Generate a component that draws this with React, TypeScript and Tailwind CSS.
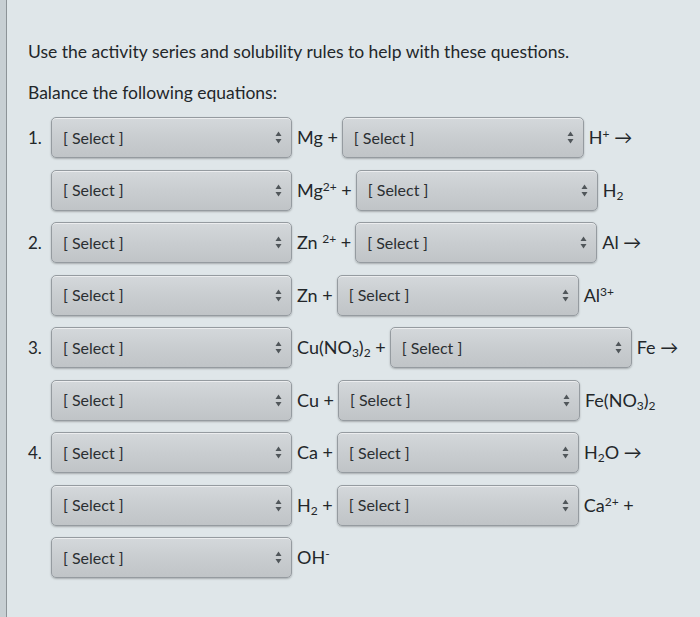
import React from "react"

type Part = React.ReactNode

function Arrows() {
  return (
    <svg width="7" height="13" viewBox="0 0 7 13" className="shrink-0">
      <path d="M3.5 0.5 L6.5 5 L0.5 5 Z" fill="#50565a" />
      <path d="M3.5 12.5 L6.5 8 L0.5 8 Z" fill="#50565a" />
    </svg>
  )
}

function Select({ w }: { w: string }) {
  return (
    <div
      className={`${w} h-[41px] shrink-0 flex items-center justify-between pl-[11px] pr-[9px] rounded-[5px] border border-[#959ba0] bg-gradient-to-b from-[#d4d8db] via-[#c9cdd0] to-[#c0c4c7] shadow-[0_1px_2px_rgba(0,0,0,0.25),inset_0_1px_0_rgba(255,255,255,0.55)]`}
    >
      <span className="text-[16px] text-[#2b2f32]">[ Select ]</span>
      <Arrows />
    </div>
  )
}

function Txt({ children }: { children: Part }) {
  return <span className="ml-[5px] mr-[4px] whitespace-nowrap text-[18px] text-[#23272a]">{children}</span>
}

const Sup = ({ children }: { children: Part }) => <sup className="text-[12px]">{children}</sup>
const Sub = ({ children }: { children: Part }) => <sub className="text-[12px]">{children}</sub>

interface RowProps {
  num?: string
  mid: Part
  end: Part
  second?: boolean
}

function Row({ num, mid, end, second = true }: RowProps) {
  return (
    <div className="flex items-center h-[41px]">
      <span className="w-[23px] shrink-0 text-[17px] text-[#23272a]">{num}</span>
      <Select w="w-[241px]" />
      <Txt>{mid}</Txt>
      {second && <Select w="w-[242px]" />}
      {end && <Txt>{end}</Txt>}
    </div>
  )
}

export default function App() {
  return (
    <div
      className="w-[700px] h-[617px] flex overflow-hidden bg-[#dfe6e9]"
      style={{ fontFamily: "Lato, 'Open Sans', sans-serif" }}
    >
      <div className="w-[7px] shrink-0 bg-[#c7cfd3] border-r border-[#8c9397]" />
      <div className="flex-1 pl-[21px] pt-[40px]">
        <p className="text-[17.5px] leading-[24px] text-[#23272a]">
          Use the activity series and solubility rules to help with these questions.
        </p>
        <p className="mt-[17px] text-[17.5px] leading-[24px] text-[#23272a]">Balance the following equations:</p>

        <div className="mt-[12px] flex flex-col gap-[11.5px]">
          <Row num="1." mid={<>Mg +</>} end={<>H<Sup>+</Sup> →</>} />
          <Row mid={<>Mg<Sup>2+</Sup> +</>} end={<>H<Sub>2</Sub></>} />
          <Row num="2." mid={<>Zn <Sup>2+</Sup> +</>} end={<>Al →</>} />
          <Row mid={<>Zn +</>} end={<>Al<Sup>3+</Sup></>} />
          <Row num="3." mid={<>Cu(NO<Sub>3</Sub>)<Sub>2</Sub> +</>} end={<>Fe →</>} />
          <Row mid={<>Cu +</>} end={<>Fe(NO<Sub>3</Sub>)<Sub>2</Sub></>} />
          <Row num="4." mid={<>Ca +</>} end={<>H<Sub>2</Sub>O →</>} />
          <Row mid={<>H<Sub>2</Sub> +</>} end={<>Ca<Sup>2+</Sup> +</>} />
          <Row mid={<>OH<Sup>-</Sup></>} end={null} second={false} />
        </div>
      </div>
    </div>
  )
}
